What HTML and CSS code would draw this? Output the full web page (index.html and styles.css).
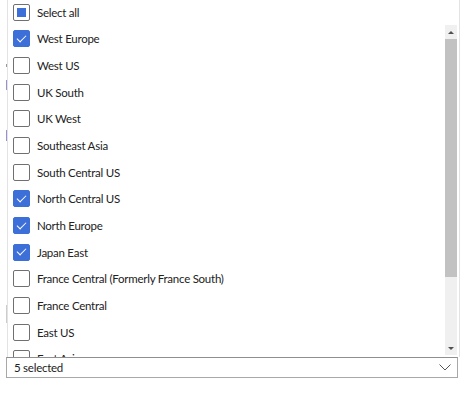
FILE: index.html
```html
<!DOCTYPE html>
<html lang="en">
<head>
    <meta charset="UTF-8">
    <meta name="viewport" content="width=device-width, initial-scale=1.0">
    <title>Regions</title>
    <link rel="stylesheet" href="styles.css">
</head>
<body>
    <div class="page">
        <span class="mark mark-comma"></span>
        <span class="mark mark-purple mark-a"></span>
        <span class="mark mark-purple mark-b"></span>
        <span class="mark mark-gray mark-c"></span>

        <div class="dropdown">
            <div class="popup">
                <ul class="options">
                    <li class="option"><span class="box partial"></span>Select all</li>
                    <li class="option"><span class="box checked"></span>West Europe</li>
                    <li class="option"><span class="box"></span>West US</li>
                    <li class="option"><span class="box"></span>UK South</li>
                    <li class="option"><span class="box"></span>UK West</li>
                    <li class="option"><span class="box"></span>Southeast Asia</li>
                    <li class="option"><span class="box"></span>South Central US</li>
                    <li class="option"><span class="box checked"></span>North Central US</li>
                    <li class="option"><span class="box checked"></span>North Europe</li>
                    <li class="option"><span class="box checked"></span>Japan East</li>
                    <li class="option"><span class="box"></span>France Central (Formerly France South)</li>
                    <li class="option"><span class="box"></span>France Central</li>
                    <li class="option"><span class="box"></span>East US</li>
                    <li class="option"><span class="box"></span>East Asia</li>
                </ul>
                <div class="scrollbar">
                    <span class="arrow arrow-up"></span>
                    <span class="thumb"></span>
                    <span class="track-rest"></span>
                    <span class="arrow arrow-down"></span>
                </div>
            </div>
            <div class="select-box">
                <span class="select-value">5 selected</span>
                <svg class="chevron" width="12" height="7" viewBox="0 0 12 7">
                    <path d="M0.5 0.5 L6 6 L11.5 0.5" fill="none" stroke="#555" stroke-width="1"/>
                </svg>
            </div>
        </div>
    </div>
</body>
</html>
```

FILE: styles.css
```css
:root {
    --text-color: #222;
    --box-border: #707070;
    --check-blue: #3d6fd9;
    --track-color: #f0f0f0;
    --thumb-color: #c2c2c2;
    --edge-color: #e3e3e3;
}

body {
    margin: 0;
    background: #fff;
    font-family: Lato, 'Noto Sans', sans-serif;
    font-size: 11.5px;
    letter-spacing: -0.25px;
    color: var(--text-color);
}

.page {
    position: relative;
    width: 474px;
    height: 399px;
    overflow: hidden;
}

/* bits of the page behind the popup */
.mark {
    position: absolute;
    display: block;
}
.mark-comma {
    left: 6px;
    top: 64px;
    width: 1px;
    height: 3px;
    background: #999;
}
.mark-purple {
    left: 6px;
    width: 1px;
    background: #9b8fcf;
}
.mark-a { top: 80px; height: 10px; }
.mark-b { top: 130px; height: 11px; }
.mark-gray {
    left: 6px;
    width: 1px;
    background: #ccc;
}
.mark-c { top: 305px; height: 18px; }

.dropdown {
    position: relative;
    width: 460px;
    display: flex;
    flex-direction: column;
}

.popup {
    height: 357px;
    margin-left: 7px;
    border-left: 1px solid var(--edge-color);
    border-right: 1px solid var(--edge-color);
    background: #fff;
    display: flex;
    overflow: hidden;
}

.options {
    flex: 1;
    list-style: none;
    margin: -1px 0 0 0;
    padding: 0;
}

.option {
    height: 26.67px;
    display: flex;
    align-items: center;
    gap: 7px;
    padding-left: 5px;
    white-space: nowrap;
}

.box {
    width: 15px;
    height: 15px;
    border: 1px solid var(--box-border);
    border-radius: 2px;
    box-sizing: content-box;
    display: flex;
    align-items: center;
    justify-content: center;
    flex-shrink: 0;
}
.box.partial::before {
    content: '';
    width: 9px;
    height: 9px;
    background: var(--check-blue);
}
.box.checked {
    background: var(--check-blue);
    border-color: var(--check-blue);
}
.box.checked::before {
    content: '';
    width: 8px;
    height: 4px;
    margin-top: -3px;
    border-left: 1px solid #fff;
    border-bottom: 1px solid #fff;
    transform: rotate(-45deg);
}

.scrollbar {
    width: 12px;
    margin: 25px 2px 2px 0;
    background: var(--track-color);
    display: flex;
    flex-direction: column;
}
.arrow {
    height: 14px;
    display: flex;
    align-items: center;
    justify-content: center;
}
.arrow::before {
    content: '';
    border-left: 3px solid transparent;
    border-right: 3px solid transparent;
}
.arrow-up::before { border-bottom: 3px solid #505050; }
.arrow-down::before { border-top: 3px solid #505050; }
.thumb {
    height: 238px;
    background: var(--thumb-color);
}
.track-rest { flex: 1; }

.select-box {
    height: 19px;
    margin-left: 6px;
    margin-right: 2px;
    border: 1px solid #a8a8a8;
    border-top-color: #8f8f8f;
    background: #fff;
    display: flex;
    align-items: center;
    justify-content: space-between;
    padding: 0 6px 0 7px;
}
.select-value {
    line-height: 19px;
}
.chevron {
    display: block;
}
```
